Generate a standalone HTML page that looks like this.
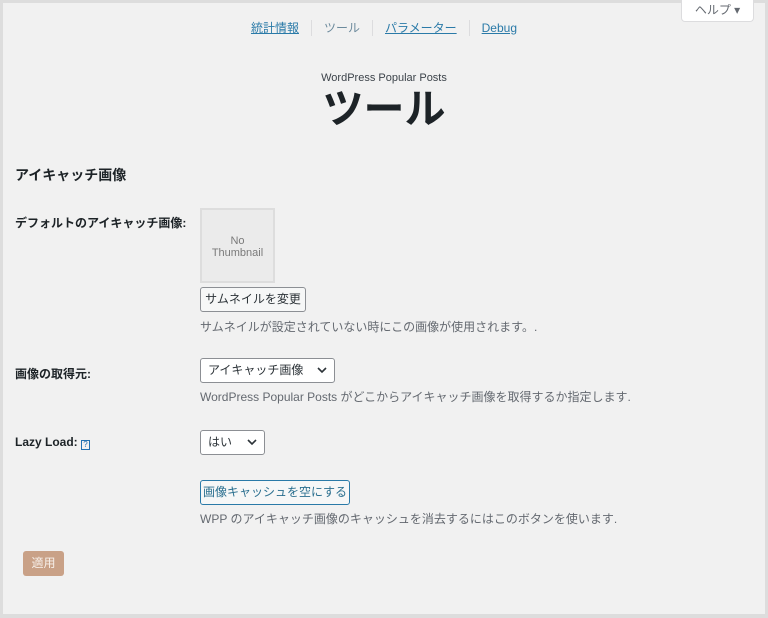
<!DOCTYPE html>
<html><head><meta charset="utf-8"><style>
*{box-sizing:border-box;margin:0;padding:0}
html,body{width:768px;height:618px;overflow:hidden;background:#ddd}
body{font-family:"Liberation Sans","Noto Sans CJK JP",sans-serif;color:#1d2327;font-size:12px;position:relative}
.page{position:absolute;left:3px;top:3px;width:762px;height:611px;background:#f1f1f1}
.a{position:absolute;white-space:nowrap}
.nav{top:17px;left:0;width:100%;text-align:center;font-size:12px}
.nav span{display:inline-block;padding:0 12px;border-left:1px solid #dcdcde;line-height:16px}
.nav span:first-child{border-left:none}
.nav a{color:#2a7aa8;text-decoration:underline}
.help{left:678px;top:-3px;width:73px;height:22px;background:#fff;border:1px solid #dcdcde;border-top:none;border-radius:0 0 4px 4px;color:#646970;font-size:12px;text-align:center;line-height:20px}
.lbl{font-weight:bold;font-size:12px;left:12px}
.desc{color:#646970;font-size:12px;left:197px}
.btn{background:#f6f7f7;border:1px solid #8c8f94;border-radius:3px;font-size:12px;text-align:center;line-height:22px;color:#2c3338}
.sel{background:#fff;border:1px solid #8c8f94;border-radius:3px;font-size:12px;line-height:22px;padding-left:7px;color:#2c3338}
.sel svg{position:absolute;right:7px;top:8px}
</style></head><body><div class="page">
<div class="a nav"><span><a>統計情報</a></span><span style="color:#6c8a9c">ツール</span><span><a>パラメーター</a></span><span><a>Debug</a></span></div>
<div class="a help">ヘルプ ▾</div>
<div class="a" style="top:69px;left:0;width:100%;text-align:center;font-size:11px;color:#3c434a">WordPress Popular Posts</div>
<div class="a" style="top:81px;left:0;width:100%;text-align:center;font-size:41px;font-weight:bold;line-height:50px">ツール</div>
<div class="a" style="top:162px;left:12px;font-size:14px;font-weight:bold">アイキャッチ画像</div>
<div class="a lbl" style="top:211px">デフォルトのアイキャッチ画像:</div>
<div class="a" style="left:197px;top:205px;width:75px;height:75px;background:#ebebeb;border:2px solid #ddd;color:#7a7a7a;font-size:11px;text-align:center;line-height:12px;padding-top:25px">No<br>Thumbnail</div>
<div class="a btn" style="left:197px;top:284px;width:106px;height:25px">サムネイルを変更</div>
<div class="a desc" style="top:315px">サムネイルが設定されていない時にこの画像が使用されます。.</div>
<div class="a lbl" style="top:362px">画像の取得元:</div>
<div class="a sel" style="left:197px;top:355px;width:135px;height:25px">アイキャッチ画像<svg width="10" height="7" viewBox="0 0 10 7"><path d="M1 1l4 4 4-4" stroke="#2c3338" stroke-width="1.6" fill="none"/></svg></div>
<div class="a desc" style="top:385px">WordPress Popular Posts がどこからアイキャッチ画像を取得するか指定します.</div>
<div class="a lbl" style="top:432px">Lazy Load: <span style="display:inline-block;width:9px;height:10px;border:1px solid #2271b1;font-size:8px;line-height:8px;color:#2271b1;text-align:center;font-weight:normal;vertical-align:-1px">?</span></div>
<div class="a sel" style="left:197px;top:427px;width:65px;height:25px">はい<svg width="10" height="7" viewBox="0 0 10 7"><path d="M1 1l4 4 4-4" stroke="#2c3338" stroke-width="1.6" fill="none"/></svg></div>
<div class="a btn" style="left:197px;top:477px;width:150px;height:25px;border-color:#2a7aa8;color:#2a6f8f">画像キャッシュを空にする</div>
<div class="a desc" style="top:507px">WPP のアイキャッチ画像のキャッシュを消去するにはこのボタンを使います.</div>
<div class="a" style="left:20px;top:548px;width:41px;height:25px;background:#c9a187;border-radius:3px;color:#f6efe9;font-size:12px;text-align:center;line-height:25px">適用</div>
</div></body></html>
